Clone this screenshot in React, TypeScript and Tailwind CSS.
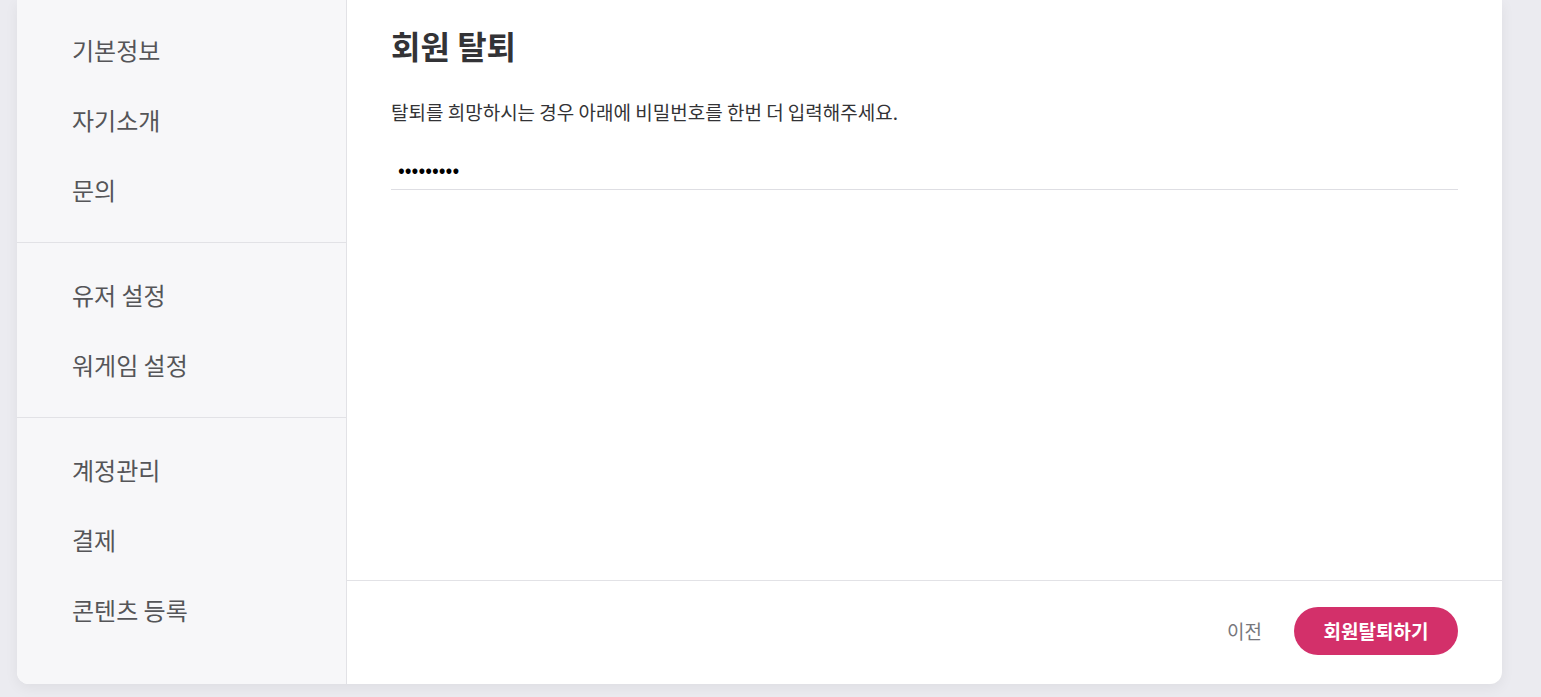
import React from "react";

const font = { fontFamily: '"Noto Sans CJK KR", "Noto Sans", sans-serif' };

function Item({ label }: { label: string }) {
  return (
    <div className="h-[70px] flex items-center pl-[55px] text-[24px] text-[#555558]">{label}</div>
  );
}

export default function App() {
  return (
    <div className="w-[1541px] h-[697px] bg-[#ebebf0] overflow-hidden" style={font}>
      <div className="ml-[17px] w-[1485px] h-[684px] bg-white rounded-b-[12px] shadow-[0_4px_14px_rgba(0,0,0,0.06)] flex overflow-hidden">
        <aside className="w-[330px] shrink-0 bg-[#f7f7f9] border-r border-[#e2e2e6] flex flex-col">
          <div className="pt-[15px] pb-[17px] border-b border-[#e2e2e6]">
            <Item label="기본정보" />
            <Item label="자기소개" />
            <Item label="문의" />
          </div>
          <div className="pt-[17px] pb-[17px] border-b border-[#e2e2e6]">
            <Item label="유저 설정" />
            <Item label="워게임 설정" />
          </div>
          <div className="pt-[17px]">
            <Item label="계정관리" />
            <Item label="결제" />
            <Item label="콘텐츠 등록" />
          </div>
        </aside>
        <main className="flex-1 flex flex-col">
          <div className="flex-1 px-[44px] pt-[22px]">
            <h1 className="text-[32px] font-bold text-[#333336] leading-[46px]">회원 탈퇴</h1>
            <p className="mt-[31px] text-[19px] text-[#333336] leading-[26px]">
              탈퇴를 희망하시는 경우 아래에 비밀번호를 한번 더 입력해주세요.
            </p>
            <div className="mt-[22px] border-b border-[#dedee3]">
              <input
                type="password"
                readOnly
                value="123456789"
                className="w-full h-[42px] pl-[7px] text-[20px] text-black outline-none bg-transparent"
              />
            </div>
          </div>
          <div className="h-[104px] border-t border-[#e2e2e6] flex items-center justify-end gap-[32px] pr-[44px] pb-[3px]">
            <button className="text-[19px] text-[#77777c]">이전</button>
            <button className="w-[164px] h-[48px] rounded-full bg-[#d3306a] text-white text-[19px] font-bold">
              회원탈퇴하기
            </button>
          </div>
        </main>
      </div>
    </div>
  );
}
